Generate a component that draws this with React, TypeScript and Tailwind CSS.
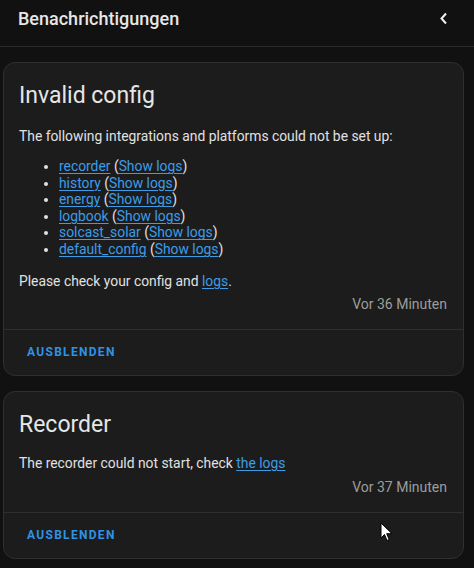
import { ReactNode } from 'react'

const items = ['recorder', 'history', 'energy', 'logbook', 'solcast_solar', 'default_config']

function Link({ children }: { children: ReactNode }) {
  return <a className="text-[#3d9ce8] underline underline-offset-[1.5px] decoration-1">{children}</a>
}

function Card({ title, children, time, timeGap }: { title: string; children: ReactNode; time: string; timeGap: string }) {
  return (
    <div className="rounded-[12px] border border-[#2f2f2f] bg-[#1c1c1c]">
      <div className="px-[15px] pt-[17px]">
        <h2 className="text-[23px] leading-[32px] text-[#e6e6e6]">{title}</h2>
        {children}
        <div className={timeGap + ' text-right text-[14px] leading-[20px] text-[#9c9c9c] pr-[1px]'}>{time}</div>
      </div>
      <div className="mt-[15px] border-t border-[#2f2f2f] h-[46px] flex items-center pl-[23px]">
        <button className="text-[12px] font-bold tracking-[1.3px] text-[#2f92e4]">AUSBLENDEN</button>
      </div>
    </div>
  )
}

export default function App() {
  return (
    <div className="relative w-[474px] h-[568px] overflow-hidden bg-[#111111] font-['Roboto',sans-serif] text-[#e1e1e1]">
      <header className="h-[47px] border-b border-[#2a2a2a] flex items-center justify-between pl-[18px] pr-[26px] pb-[9px]">
        <h1 className="text-[18px] font-medium text-[#e6e6e6]">Benachrichtigungen</h1>
        <svg width="9" height="13" viewBox="0 0 9 13">
          <path d="M7 1.5 2.5 6.5 7 11.5" fill="none" stroke="#f0f0f0" strokeWidth="2" />
        </svg>
      </header>

      <div className="flex flex-col gap-[15px] pt-[15px] pl-[3px] pr-[10px]">
        <Card title="Invalid config" time="Vor 36 Minuten" timeGap="mt-[3px]">
          <p className="mt-[14px] text-[13.85px] leading-[20px]">
            The following integrations and platforms could not be set up:
          </p>
          <ul className="mt-[12px] pl-[40px] list-disc text-[13.85px] leading-[16.6px] marker:text-[#e1e1e1]">
            {items.map(i => (
              <li key={i}>
                <Link>{i}</Link> (<Link>Show logs</Link>)
              </li>
            ))}
          </ul>
          <p className="mt-[13px] text-[13.85px] leading-[20px]">
            Please check your config and <Link>logs</Link>.
          </p>
        </Card>

        <Card title="Recorder" time="Vor 37 Minuten" timeGap="mt-[4px]">
          <p className="mt-[12px] text-[13.85px] leading-[20px]">
            The recorder could not start, check <Link>the logs</Link>
          </p>
        </Card>
      </div>

      <svg className="absolute left-[380px] top-[522px]" width="13" height="20" viewBox="0 0 13 20">
        <path d="M1 1v15l3.5-3.5 2.5 6 2.2-1-2.5-5.8H12z" fill="#fff" stroke="#000" strokeWidth="1" />
      </svg>
    </div>
  )
}
